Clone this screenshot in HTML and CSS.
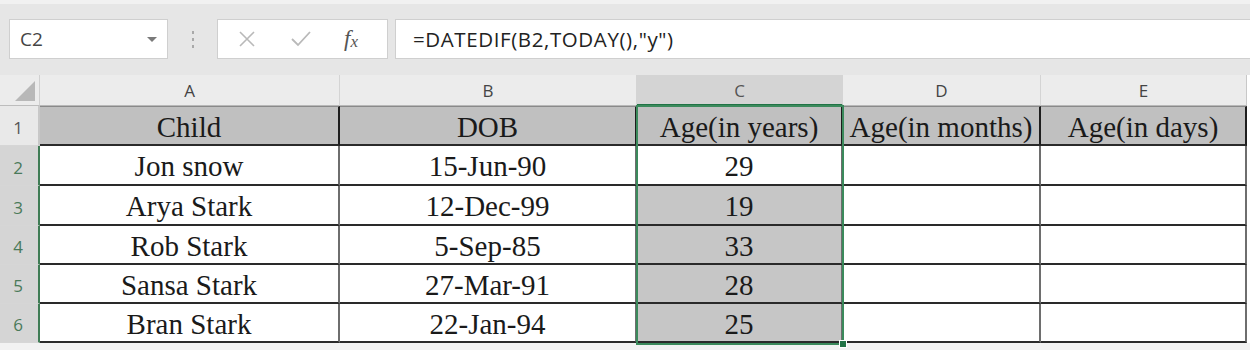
FILE: index.html
```html
<!DOCTYPE html>
<html>
<head>
<meta charset="utf-8">
<link rel="stylesheet" href="styles.css">
</head>
<body>
<div class="app">
  <div class="toolbar">
    <div class="namebox">
      <span class="name">C2</span>
      <span class="caret"></span>
    </div>
    <div class="dots"><i></i><i></i><i></i></div>
    <div class="fxbox">
      <svg class="ico" width="18" height="18" viewBox="0 0 18 18"><path d="M2 2L16 16M16 2L2 16" stroke="#b9b9b9" stroke-width="1.6" fill="none"/></svg>
      <svg class="ico" width="22" height="18" viewBox="0 0 22 18"><path d="M2 9L8 15L20 2" stroke="#b9b9b9" stroke-width="1.8" fill="none"/></svg>
      <span class="fx"><span class="f">f</span><span class="x">x</span></span>
    </div>
    <div class="formula">=DATEDIF(B2,TODAY(),"y")</div>
  </div>
  <div class="sheet">
    <div class="corner"><span class="tri"></span></div>
    <div class="colh">A</div>
    <div class="colh">B</div>
    <div class="colh sel">C</div>
    <div class="colh">D</div>
    <div class="colh last">E</div>

    <div class="rowh">1</div>
    <div class="cell head">Child</div>
    <div class="cell head">DOB</div>
    <div class="cell head">Age(in years)</div>
    <div class="cell head">Age(in months)</div>
    <div class="cell head">Age(in days)</div>

    <div class="rowh sel">2</div>
    <div class="cell">Jon snow</div>
    <div class="cell">15-Jun-90</div>
    <div class="cell">29</div>
    <div class="cell"></div>
    <div class="cell"></div>

    <div class="rowh sel">3</div>
    <div class="cell">Arya Stark</div>
    <div class="cell">12-Dec-99</div>
    <div class="cell hl">19</div>
    <div class="cell"></div>
    <div class="cell"></div>

    <div class="rowh sel">4</div>
    <div class="cell">Rob Stark</div>
    <div class="cell">5-Sep-85</div>
    <div class="cell hl">33</div>
    <div class="cell"></div>
    <div class="cell"></div>

    <div class="rowh sel">5</div>
    <div class="cell">Sansa Stark</div>
    <div class="cell">27-Mar-91</div>
    <div class="cell hl">28</div>
    <div class="cell"></div>
    <div class="cell"></div>

    <div class="rowh sel">6</div>
    <div class="cell">Bran Stark</div>
    <div class="cell">22-Jan-94</div>
    <div class="cell hl">25</div>
    <div class="cell"></div>
    <div class="cell"></div>

    <div class="selection"><span class="handle"></span></div>
  </div>
</div>
</body>
</html>
```

FILE: styles.css
```css
html, body {
  margin: 0;
  padding: 0;
  background: #f2f2f2;
}
.app {
  width: 1250px;
  height: 350px;
  overflow: hidden;
  font-family: "Open Sans", "Noto Sans", sans-serif;
}
.toolbar {
  height: 75px;
  box-sizing: border-box;
  background: #e6e6e6;
  border-top: 4px solid #f1f1f1;
  padding-top: 15px;
  display: flex;
  align-items: flex-start;
}
.namebox {
  margin-left: 9px;
  width: 159px;
  height: 40px;
  box-sizing: border-box;
  background: #fff;
  border: 1px solid #cfcfcf;
  display: flex;
  align-items: center;
  justify-content: space-between;
  padding: 0 10px 0 10px;
}
.name {
  font-size: 19px;
  color: #444;
}
.caret {
  width: 0;
  height: 0;
  border-left: 5px solid transparent;
  border-right: 5px solid transparent;
  border-top: 5px solid #7a7a7a;
}
.dots {
  width: 49px;
  height: 40px;
  display: flex;
  flex-direction: column;
  align-items: center;
  justify-content: center;
  gap: 4px;
}
.dots i {
  display: block;
  width: 2px;
  height: 3px;
  background: #a9a9a9;
}
.fxbox {
  width: 171px;
  height: 40px;
  box-sizing: border-box;
  background: #fff;
  border: 1px solid #cfcfcf;
  display: flex;
  align-items: center;
  padding-left: 20px;
  gap: 36px;
}
.fxbox .ico:nth-child(2) {
  margin-left: -2px;
}
.fx {
  font-family: "Liberation Serif", serif;
  font-style: italic;
  color: #555;
  margin-left: -4px;
}
.fx .f {
  font-size: 23px;
}
.fx .x {
  font-size: 17px;
  position: relative;
  top: 1px;
}
.formula {
  margin-left: 7px;
  flex: 1;
  height: 40px;
  box-sizing: border-box;
  background: #fff;
  border: 1px solid #cfcfcf;
  border-right: none;
  padding-left: 17px;
  font-size: 20.5px;
  line-height: 38px;
  color: #222;
  letter-spacing: 0.6px;
}
.sheet {
  position: relative;
  display: grid;
  grid-template-columns: 40px 300px 297px 206px 198px 206px;
  grid-template-rows: 31px 40px 40px 40px 39px 39px 39px;
  background: #fff;
}
.corner {
  background: #ececec;
  border-right: 1px solid #d0d0d0;
  border-bottom: 1px solid #bdbdbd;
  position: relative;
}
.tri {
  position: absolute;
  right: 4px;
  bottom: 4px;
  width: 0;
  height: 0;
  border-left: 20px solid transparent;
  border-bottom: 20px solid #b8b8b8;
}
.colh {
  background: #ececec;
  border-right: 1px solid #d4d4d4;
  border-bottom: 1px solid #b8b8b8;
  display: flex;
  align-items: center;
  justify-content: center;
  font-size: 17px;
  color: #444;
  padding-top: 1px;
  box-sizing: border-box;
}
.colh.sel {
  background: #d4d4d4;
  border-bottom: 2px solid #217346;
  color: #555;
}
.colh.last {
  border-right: 1px solid #c8c8c8;
}
.rowh {
  background: #e9e9e9;
  border-right: 2px solid #c8c8c8;
  border-bottom: 1px solid #d6d6d6;
  display: flex;
  align-items: center;
  justify-content: center;
  font-size: 17px;
  color: #555;
  box-sizing: border-box;
  padding-right: 2px;
  padding-top: 3px;
}
.rowh.sel {
  background: #d5d5d5;
  border-right: 2px solid #3f7c55;
  color: #4a7a5a;
}
.cell {
  font-family: "Liberation Serif", "Times New Roman", serif;
  font-size: 29px;
  color: #1a1a1a;
  display: flex;
  align-items: center;
  justify-content: center;
  border-right: 2px solid #6e6e6e;
  border-bottom: 2px solid #2a2a2a;
  box-sizing: border-box;
  padding-top: 3px;
  white-space: nowrap;
}
.cell.head {
  background: #c0c0c0;
  border-right: 2px solid #1e1e1e;
  border-top: 1px solid #8a8a8a;
}
.cell.hl {
  background: #c6c6c6;
}
.selection {
  position: absolute;
  left: 636px;
  top: 30px;
  width: 208px;
  height: 240px;
  box-sizing: border-box;
  border: 2px solid #3b8a5c;
  pointer-events: none;
}
.handle {
  position: absolute;
  right: -5px;
  bottom: -5px;
  width: 6px;
  height: 6px;
  background: #217346;
  border: 1px solid #fff;
}
```
